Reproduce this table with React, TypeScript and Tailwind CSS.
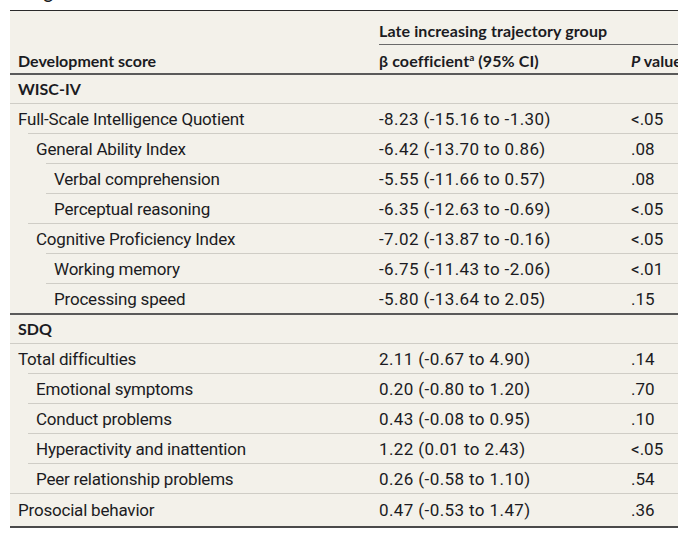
import React from "react";

type Row = { label: string; indent: number; beta: string; p: string; last?: boolean };

const wisc: Row[] = [
  { label: "Full-Scale Intelligence Quotient", indent: 0, beta: "-8.23 (-15.16 to -1.30)", p: "<.05" },
  { label: "General Ability Index", indent: 1, beta: "-6.42 (-13.70 to 0.86)", p: ".08" },
  { label: "Verbal comprehension", indent: 2, beta: "-5.55 (-11.66 to 0.57)", p: ".08" },
  { label: "Perceptual reasoning", indent: 2, beta: "-6.35 (-12.63 to -0.69)", p: "<.05" },
  { label: "Cognitive Proficiency Index", indent: 1, beta: "-7.02 (-13.87 to -0.16)", p: "<.05" },
  { label: "Working memory", indent: 2, beta: "-6.75 (-11.43 to -2.06)", p: "<.01" },
  { label: "Processing speed", indent: 2, beta: "-5.80 (-13.64 to 2.05)", p: ".15" },
];

const sdq: Row[] = [
  { label: "Total difficulties", indent: 0, beta: "2.11 (-0.67 to 4.90)", p: ".14" },
  { label: "Emotional symptoms", indent: 1, beta: "0.20 (-0.80 to 1.20)", p: ".70" },
  { label: "Conduct problems", indent: 1, beta: "0.43 (-0.08 to 0.95)", p: ".10" },
  { label: "Hyperactivity and inattention", indent: 1, beta: "1.22 (0.01 to 2.43)", p: "<.05" },
  { label: "Peer relationship problems", indent: 1, beta: "0.26 (-0.58 to 1.10)", p: ".54" },
  { label: "Prosocial behavior", indent: 0, beta: "0.47 (-0.53 to 1.47)", p: ".36", last: true },
];

const reg = { fontFamily: "Roboto, 'Noto Sans', sans-serif" };

function DataRow({ r }: { r: Row }) {
  const ml = r.indent === 0 ? "ml-0" : r.indent === 1 ? "ml-[18px]" : "ml-[36px]";
  const w = r.indent === 0 ? "w-[369px]" : r.indent === 1 ? "w-[351px]" : "w-[333px]";
  return (
    <div
      className={`flex border-t border-[#cfcdc6] ${ml} ${r.last ? "h-[33px] pb-[1px]" : "h-[30px] pt-[1px]"} items-center text-[17px]`}
      style={reg}
    >
      <div className={`${w} pl-[8px] tracking-[-0.2px]`}>{r.label}</div>
      <div className="w-[252px] tracking-[0.4px]">{r.beta}</div>
      <div className="flex-1">{r.p}</div>
    </div>
  );
}

function Section({ title, h }: { title: string; h: string }) {
  return <div className={`flex items-center ${h} pl-[8px] font-bold`}>{title}</div>;
}

export default function App() {
  return (
    <div
      className="w-[678px] h-[533px] overflow-hidden bg-white text-[16px] leading-[20px] text-[#1b1b22]"
      style={{ fontFamily: "Lato, 'Noto Sans', sans-serif" }}
    >
      <div className="h-[10px] overflow-hidden pl-[10px]">
        <div className="-mt-[17px] font-bold text-[17px] leading-[20px]">Using</div>
      </div>
      <div className="ml-[10px] w-[720px] bg-[#f3f1ea] border-t border-[#2a2a2a] border-b-2 border-b-[#4a4a4a]">
        <div className="flex h-[34px] items-end">
          <div className="w-[369px]" />
          <div className="flex-1 border-b border-[#6a6a6a] pb-[3px] font-bold tracking-[0.1px]">
            Late increasing trajectory group
          </div>
        </div>
        <div className="flex h-[30px] items-end pb-[2px] font-bold border-b-2 border-[#5a5a5a]">
          <div className="w-[369px] pl-[8px]">Development score</div>
          <div className="w-[252px] tracking-[0.1px]">
            β coefficient<sup className="text-[10px] font-bold relative -top-[6px]">a</sup> (95% CI)
          </div>
          <div className="flex-1">
            <span className="italic">P</span> value
          </div>
        </div>
        <Section title="WISC-IV" h="h-[28px]" />
        {wisc.map((r) => (
          <DataRow key={r.label} r={r} />
        ))}
        <div className="border-t-2 border-[#5a5a5a]" />
        <Section title="SDQ" h="h-[28px]" />
        {sdq.map((r) => (
          <DataRow key={r.label} r={r} />
        ))}
      </div>
    </div>
  );
}
